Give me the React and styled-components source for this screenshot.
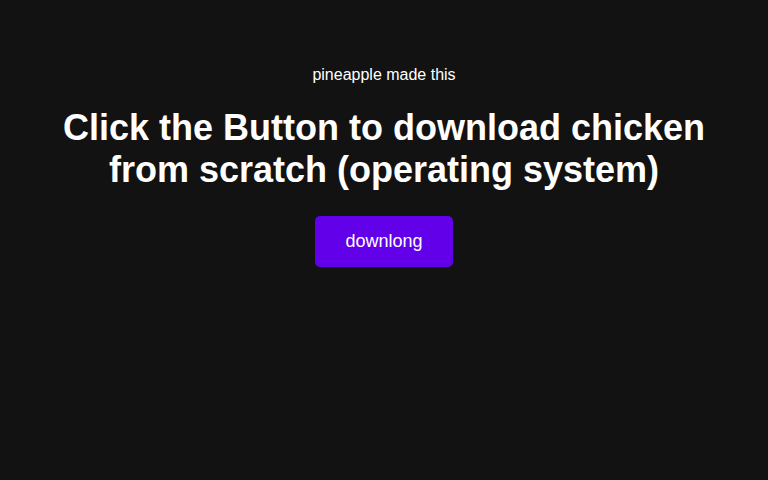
import React from "react";
import styled, { createGlobalStyle } from "styled-components";

const Global = createGlobalStyle`
  html, body { margin: 0; padding: 0; background: #121212; }
  body { font-family: "Liberation Sans", Arial, sans-serif; color: #ffffff; }
`;

const Page = styled.main`
  min-height: 480px;
  box-sizing: border-box;
  padding-top: 66px;
  display: flex;
  flex-direction: column;
  align-items: center;
  text-align: center;
  background: #121212;
`;

const Credit = styled.p`
  margin: 0;
  font-size: 16px;
  line-height: 18px;
  color: #ffffff;
`;

const Title = styled.h1`
  margin: 23px 0 0;
  font-size: 36px;
  line-height: 42px;
  font-weight: 700;
  color: #ffffff;
`;

const Button = styled.button`
  margin-top: 25px;
  padding: 15px 30px;
  border: none;
  border-radius: 5px;
  background: #6200ea;
  color: #ffffff;
  font-family: "Liberation Sans", Arial, sans-serif;
  font-size: 18px;
  line-height: 21px;
  cursor: pointer;
`;

export default function App() {
  return (
    <>
      <Global />
      <Page>
        <Credit>pineapple made this</Credit>
        <Title>
          Click the Button to download chicken
          <br />
          from scratch (operating system)
        </Title>
        <Button>downlong</Button>
      </Page>
    </>
  );
}
